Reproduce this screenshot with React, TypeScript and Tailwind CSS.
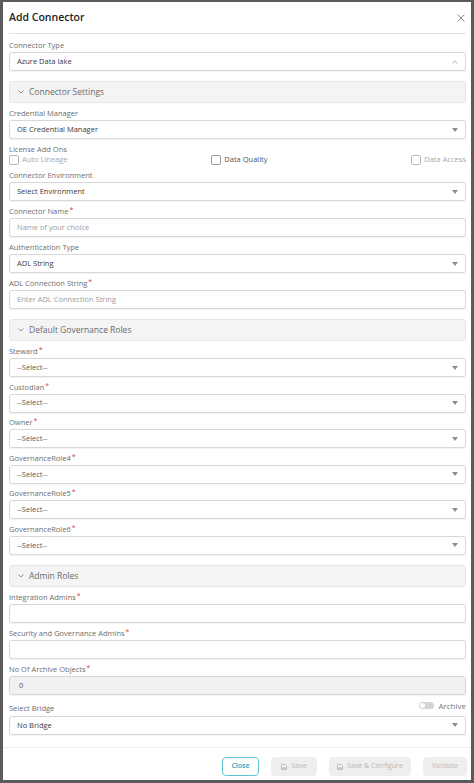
import React from "react";

type FieldProps = {
	label: string;
	required?: boolean;
	children: React.ReactNode;
};

function Asterisk() {
	return (
		<span className="relative -top-[2px] ml-[1px] text-[7px] leading-none text-[#e53e3e]">
			*
		</span>
	);
}

function Label({ text, required }: { text: string; required?: boolean }) {
	return (
		<div className="mb-[1px] h-[12px] text-[7.5px] leading-[12px] text-[#6e6e6e]">
			{text}
			{required && <Asterisk />}
		</div>
	);
}

function Caret() {
	return (
		<svg width="6" height="4" viewBox="0 0 6 4" className="shrink-0">
			<path d="M0 0 L6 0 L3 4 Z" fill="#8c8c8c" />
		</svg>
	);
}

function ChevronUp() {
	return (
		<svg width="6" height="4" viewBox="0 0 6 4" className="shrink-0">
			<path d="M0.5 3.5 L3 1 L5.5 3.5" fill="none" stroke="#9a9a9a" strokeWidth="0.8" />
		</svg>
	);
}

function SelectBox({
	value,
	up,
	muted,
}: {
	value: string;
	up?: boolean;
	muted?: boolean;
}) {
	return (
		<div className="flex h-[19px] items-center justify-between rounded-[3px] border border-[#d7d7d7] bg-white pl-[7px] pr-[7px] shadow-[0_1px_1px_rgba(0,0,0,0.05)]">
			<span className={`text-[7.5px] ${muted ? "text-[#5a5a5a]" : "text-[#3a3a3a]"}`}>
				{value}
			</span>
			{up ? <ChevronUp /> : <Caret />}
		</div>
	);
}

function TextBox({
	placeholder,
	value,
	disabled,
}: {
	placeholder?: string;
	value?: string;
	disabled?: boolean;
}) {
	return (
		<div
			className={`flex h-[19px] items-center rounded-[3px] border border-[#d7d7d7] pl-[7px] shadow-[0_1px_1px_rgba(0,0,0,0.05)] ${
				disabled ? "bg-[#f1f1f1]" : "bg-white"
			}`}
		>
			{value !== undefined ? (
				<span className="pl-[2px] text-[7.5px] text-[#555]">{value}</span>
			) : (
				<span className="text-[7.5px] text-[#9c9c9c]">{placeholder}</span>
			)}
		</div>
	);
}

function Field({ label, required, children }: FieldProps) {
	return (
		<div>
			<Label text={label} required={required} />
			{children}
		</div>
	);
}

function Section({ title }: { title: string }) {
	return (
		<div className="mt-[6px] flex h-[22px] items-center gap-[5px] rounded-[3px] border border-[#e6e6e6] bg-[#f4f4f4] pl-[8px]">
			<svg width="6" height="4" viewBox="0 0 6 4">
				<path d="M0.5 0.5 L3 3 L5.5 0.5" fill="none" stroke="#7a7a7a" strokeWidth="0.8" />
			</svg>
			<span className="text-[8.5px] text-[#6a6a6a]">{title}</span>
		</div>
	);
}

function Check({ label, disabled }: { label: string; disabled?: boolean }) {
	return (
		<div className="flex items-center gap-[3px]">
			<div
				className={`h-[10px] w-[10px] rounded-[2px] border bg-white ${
					disabled ? "border-[#b8b8b8]" : "border-[#9a9a9a]"
				}`}
			/>
			<span className={`text-[7.5px] ${disabled ? "text-[#a8a8a8]" : "text-[#555]"}`}>
				{label}
			</span>
		</div>
	);
}

function SaveIcon({ color }: { color: string }) {
	return (
		<svg width="6" height="6" viewBox="0 0 6 6">
			<path d="M0.5 0.5 H4.5 L5.5 1.5 V5.5 H0.5 Z" fill="none" stroke={color} strokeWidth="0.8" />
			<rect x="1.5" y="3.3" width="3" height="1.6" fill={color} />
		</svg>
	);
}

const roles = [
	"Steward",
	"Custodian",
	"Owner",
	"GovernanceRole4",
	"GovernanceRole5",
	"GovernanceRole6",
];

export default function App() {
	return (
		<div className="h-[783px] w-[474px] bg-[#5b5b5b] pb-[3px] pl-[3px] pr-[3px] pt-[2px] font-['Open_Sans',sans-serif]">
			<div className="flex h-full flex-col bg-white">
				{/* Header */}
				<div className="ml-[6px] mr-[5px] flex h-[32px] items-center justify-between border-b border-[#e2e2e2]">
					<span className="text-[10.5px] font-semibold text-[#222]">Add Connector</span>
					<svg width="8" height="8" viewBox="0 0 8 8" className="mr-[1px]">
						<path d="M0.5 0.5 L7.5 7.5 M7.5 0.5 L0.5 7.5" stroke="#7a7a7a" strokeWidth="0.9" />
					</svg>
				</div>

				{/* Body */}
				<div className="flex flex-1 flex-col gap-[4px] pl-[6px] pr-[5px] pt-[5px]">
					<Field label="Connector Type">
						<SelectBox value="Azure Data lake" up />
					</Field>

					<Section title="Connector Settings" />

					<Field label="Credential Manager">
						<SelectBox value="OE Credential Manager" />
					</Field>

					<div>
						<div className="h-[12px] text-[7.5px] leading-[12px] text-[#6e6e6e]">
							License Add Ons
						</div>
						<div className="flex h-[10px] items-center justify-between">
							<Check label="Auto Lineage" disabled />
							<Check label="Data Quality" />
							<Check label="Data Access" disabled />
						</div>
					</div>

					<Field label="Connector Environment">
						<SelectBox value="Select Environment" />
					</Field>

					<Field label="Connector Name" required>
						<TextBox placeholder="Name of your choice" />
					</Field>

					<Field label="Authentication Type">
						<SelectBox value="ADL String" />
					</Field>

					<Field label="ADL Connection String" required>
						<TextBox placeholder="Enter ADL Connection String" />
					</Field>

					<Section title="Default Governance Roles" />

					<div className="flex flex-col gap-[3.6px]">
						{roles.map((role) => (
							<Field key={role} label={role} required>
								<SelectBox value="--Select--" muted />
							</Field>
						))}
					</div>

					<Section title="Admin Roles" />

					<Field label="Integration Admins" required>
						<TextBox />
					</Field>

					<Field label="Security and Governance Admins" required>
						<TextBox />
					</Field>

					<Field label="No Of Archive Objects" required>
						<TextBox value="0" disabled />
					</Field>

					<div>
						<div className="mb-[1px] flex h-[16px] justify-between">
							<span className="self-end pb-[1px] text-[7.5px] leading-[12px] text-[#6e6e6e]">
								Select Bridge
							</span>
							<div className="flex h-[14px] items-center gap-[4px]">
								<div className="flex h-[7px] w-[15px] items-center rounded-full bg-[#d4d4d4] pl-[1px]">
									<div className="h-[5px] w-[5px] rounded-full bg-white" />
								</div>
								<span className="text-[8px] text-[#777]">Archive</span>
							</div>
						</div>
						<SelectBox value="No Bridge" />
					</div>
				</div>

				{/* Footer */}
				<div className="flex h-[33px] justify-end gap-[12px] border-t border-[#efefef] pr-[4px] pt-[9px]">
					<button className="h-[19px] w-[37px] rounded-[4px] border border-[#5ec5d6] bg-white text-[7px] font-semibold text-[#17a2bd]">
						Close
					</button>
					<button className="flex h-[19px] w-[46px] items-center justify-center gap-[4px] rounded-[4px] bg-[#eeeeee] text-[7px] text-[#b8b8b8]">
						<SaveIcon color="#b8b8b8" />
						Save
					</button>
					<button className="flex h-[19px] w-[82px] items-center justify-center gap-[4px] rounded-[4px] bg-[#eeeeee] text-[7px] text-[#b8b8b8]">
						<SaveIcon color="#b8b8b8" />
						Save &amp; Configure
					</button>
					<button className="h-[19px] w-[44px] rounded-[4px] bg-[#eeeeee] text-[7px] text-[#bdbdbd]">
						Validate
					</button>
				</div>
			</div>
		</div>
	);
}
